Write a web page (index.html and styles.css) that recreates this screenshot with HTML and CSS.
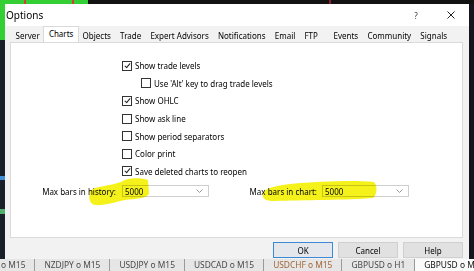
FILE: index.html
```html
<!DOCTYPE html>
<html lang="en">
<head>
    <meta charset="UTF-8">
    <title>Options</title>
    <link rel="stylesheet" href="styles.css">
</head>
<body>
    <div class="desk">
        <div class="top-strip"></div>
        <div class="middle">
            <div class="chart-left"></div>

            <div class="dialog">
                <div class="titlebar">
                    <span class="title">Options</span>
                    <span class="help-btn">?</span>
                    <span class="close-btn">
                        <svg width="8" height="8" viewBox="0 0 8 8"><path d="M0.5 0.5 L7.5 7.5 M7.5 0.5 L0.5 7.5" stroke="#222" stroke-width="1"/></svg>
                    </span>
                </div>

                <div class="tabs">
                    <div class="tab">Server</div>
                    <div class="tab active">Charts</div>
                    <div class="tab">Objects</div>
                    <div class="tab">Trade</div>
                    <div class="tab">Expert Advisors</div>
                    <div class="tab">Notifications</div>
                    <div class="tab">Email</div>
                    <div class="tab ftp">FTP</div>
                    <div class="tab">Events</div>
                    <div class="tab">Community</div>
                    <div class="tab">Signals</div>
                </div>

                <div class="panel">
                    <div class="options">
                        <label class="opt"><span class="box checked"></span>Show trade levels</label>
                        <label class="opt sub"><span class="box"></span>Use 'Alt' key to drag trade levels</label>
                        <label class="opt"><span class="box checked"></span>Show OHLC</label>
                        <label class="opt"><span class="box"></span>Show ask line</label>
                        <label class="opt"><span class="box"></span>Show period separators</label>
                        <label class="opt"><span class="box"></span>Color print</label>
                        <label class="opt"><span class="box checked"></span>Save deleted charts to reopen</label>
                    </div>

                    <div class="max-bars">
                        <span class="field-label first">Max bars in history:</span>
                        <div class="combo">
                            <span>5000</span>
                            <svg width="7" height="4" viewBox="0 0 7 4"><path d="M0.5 0.5 L3.5 3.5 L6.5 0.5" fill="none" stroke="#999" stroke-width="1"/></svg>
                        </div>
                        <span class="field-label second">Max bars in chart:</span>
                        <div class="combo">
                            <span>5000</span>
                            <svg width="7" height="4" viewBox="0 0 7 4"><path d="M0.5 0.5 L3.5 3.5 L6.5 0.5" fill="none" stroke="#999" stroke-width="1"/></svg>
                        </div>
                    </div>
                </div>

                <div class="buttons">
                    <button class="btn default">OK</button>
                    <button class="btn">Cancel</button>
                    <button class="btn">Help</button>
                </div>
            </div>

            <div class="chart-right"></div>
        </div>

        <div class="symbol-tabs">
            <span class="sym first">o M15</span>
            <span class="sym">NZDJPY o M15</span>
            <span class="sym">USDJPY o M15</span>
            <span class="sym">USDCAD o M15</span>
            <span class="sym warm">USDCHF o M15</span>
            <span class="sym">GBPUSD o H1</span>
            <span class="sym current">GBPUSD o M1</span>
        </div>
    </div>

    <!-- highlighter marks drawn over the screenshot -->
    <svg class="marker" width="474" height="271" viewBox="0 0 474 271">
        <path d="M90 191 C95 186, 110 186, 121 182 C126 178, 140 177, 148 180 L149 194 C147 198, 135 199, 125 200 C115 202, 104 206, 95 205 C90 204, 88 199, 90 191 Z"/>
        <path d="M263 194 C264 188, 275 186, 290 184 C320 181, 360 180, 374 182 C378 186, 377 195, 373 198 C350 200, 300 200, 275 201 C266 201, 262 199, 263 194 Z"/>
    </svg>
</body>
</html>
```

FILE: styles.css
```css
body {
    margin: 0;
    background: #12141c;
    font-family: "Noto Sans", "Liberation Sans", sans-serif;
    color: #000;
    overflow: hidden;
}

.desk {
    width: 474px;
    height: 271px;
    display: flex;
    flex-direction: column;
}

.top-strip {
    height: 4px;
    background: linear-gradient(90deg, #34cf34 0, #34cf34 24px, #d04040 24px, #d04040 26px, #34cf34 26px, #34cf34 72px, #d04040 72px, #d04040 74px, #34cf34 74px, #34cf34 88px, #121212 88px, #121212 329px, #8a2030 329px, #8a2030 331px, #121212 331px);
}

.middle {
    display: flex;
    height: 255px;
}

.chart-left {
    width: 5px;
    background: linear-gradient(180deg, #34cf34 0, #34cf34 36px, #1a1f2a 36px, #1a1f2a 172px, #3f8fd8 172px, #3f8fd8 176px, #1a1f2a 176px, #1a1f2a 205px, #4fb070 205px, #4fb070 210px, #1a1f2a 210px);
}

.chart-right {
    flex: 1;
    background: #14161f;
}

.dialog {
    width: 464px;
    background: #f2f2f2;
    display: flex;
    flex-direction: column;
}

.titlebar {
    height: 22px;
    background: #fff;
    display: flex;
    align-items: center;
    padding-left: 1px;
    font-size: 10px;
}

.title {
    flex: 1;
}

.help-btn {
    width: 10px;
    text-align: center;
    font-size: 8px;
    color: #333;
    margin-right: 26px;
}

.close-btn {
    width: 8px;
    display: flex;
    margin-right: 14px;
}

.tabs {
    height: 16px;
    display: flex;
    align-items: flex-end;
    padding-left: 6px;
    font-size: 8px;
}

.tab {
    height: 13px;
    line-height: 13px;
    padding: 0 4.6px;
    white-space: nowrap;
}

.tab.active {
    height: 15px;
    line-height: 13px;
    background: #fff;
    border: 1px solid #dadada;
    border-bottom: none;
    margin: 0 -1px;
    position: relative;
    z-index: 1;
}

.tab.ftp {
    padding-right: 11px;
}

.panel {
    height: 194px;
    margin: 0 6px 0 5px;
    background: #fff;
    border: 1px solid #dadada;
}

.options {
    display: flex;
    flex-direction: column;
    padding: 14px 0 0 111px;
}

.opt {
    height: 17.6px;
    display: flex;
    align-items: center;
    font-size: 8px;
    white-space: nowrap;
}

.opt.sub {
    padding-left: 19px;
}

.box {
    width: 8px;
    height: 8px;
    border: 1px solid #333;
    background: #fff;
    margin-right: 3px;
    position: relative;
    flex: none;
}

.box.checked::after {
    content: "";
    position: absolute;
    left: 3px;
    top: 0;
    width: 2px;
    height: 5px;
    border: solid #222;
    border-width: 0 1px 1px 0;
    transform: rotate(40deg);
}

.max-bars {
    display: flex;
    align-items: center;
    margin-top: 5px;
    font-size: 8px;
}

.field-label {
    text-align: right;
    white-space: nowrap;
}

.field-label.first {
    width: 105px;
    margin-right: 6px;
}

.field-label.second {
    width: 108px;
    margin-right: 5px;
}

.combo {
    height: 10px;
    border: 1px solid #cfcfcf;
    background: #fff;
    display: flex;
    align-items: center;
    justify-content: space-between;
    padding: 0 5px 0 2px;
    width: 78px;
}

.buttons {
    display: flex;
    justify-content: flex-end;
    gap: 5px;
    margin-top: 4px;
    padding-right: 6px;
}

.btn {
    width: 60px;
    height: 16px;
    padding: 0;
    font-family: inherit;
    font-size: 8px;
    background: #e1e1e1;
    border: 1px solid #d0d0d0;
    color: #000;
}

.btn.default {
    border: 1px solid #3c8ad6;
    background: #e4e8ec;
}

.symbol-tabs {
    flex: 1;
    display: flex;
    background: #e6e6e6;
    font-size: 8.4px;
    color: #4a4a4a;
    overflow: hidden;
    white-space: nowrap;
}

.sym {
    padding: 0 9px;
    border-right: 1px solid #9a9a9a;
    line-height: 12px;
}

.sym.first {
    padding-left: 1px;
}

.sym.warm {
    color: #a0663a;
}

.sym.current {
    flex: 1;
    background: #fafafa;
    color: #111;
    border-right: none;
}

.marker {
    position: absolute;
    left: 0;
    top: 0;
    pointer-events: none;
    mix-blend-mode: multiply;
}

.marker path {
    fill: #f4f21a;
}
```
